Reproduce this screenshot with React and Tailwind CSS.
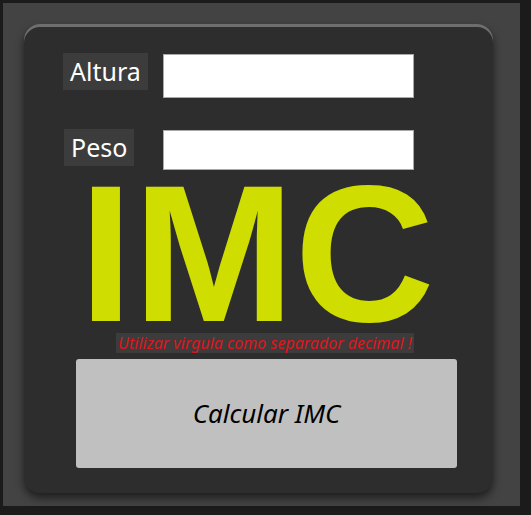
import React from "react";

// label chip + white text field, one row of the form
function Field({ label, inputClass }) {
  return (
    <div className="flex items-start">
      <div className="bg-[#3c3c3c] text-white text-[25px] leading-[37px] h-[37px] px-[7px]">
        {label}
      </div>
      <input
        type="text"
        className={`ml-auto bg-white border border-[#a9a9a9] outline-none w-[251px] ${inputClass}`}
      />
    </div>
  );
}

export default function App() {
  return (
    <div className="w-[531px] h-[515px] bg-[#1b1b1b] pt-[3px] pl-[3px] font-['Noto_Sans','Open_Sans',sans-serif]">
      <div className="w-[517px] h-[503px] bg-[#434343] pt-[21px] pl-[21px]">
        <div className="w-[469px] h-[469px] rounded-[16px] bg-[#2d2d2d] shadow-[inset_0_3px_0_#6e6e6e,0_5px_8px_rgba(0,0,0,0.55)] flex flex-col items-start pt-[29px]">
          <div className="ml-[39px] w-[351px]">
            <Field label="Altura" inputClass="h-[44px] mt-[1px]" />
          </div>
          <div className="ml-[40px] w-[350px] mt-[31px]">
            <Field label="Peso" inputClass="h-[40px] mt-[1px]" />
          </div>

          <div className="ml-[55px] h-[163px] pt-[5px] text-[194px] leading-[157px] font-bold text-[#cfdd00] font-['Liberation_Sans',Arial,sans-serif]">
            IMC
          </div>

          <div className="ml-[92px] w-[298px] h-[20px] bg-[#3c3c3c] text-[#e0141c] italic text-[16px] leading-[20px] text-center whitespace-nowrap">
            Utilizar virgula como separador decimal !
          </div>

          <button className="ml-[52px] mt-[6px] w-[381px] h-[109px] rounded-[3px] bg-[#c0c0c0] text-black italic text-[26px]">
            Calcular IMC
          </button>
        </div>
      </div>
    </div>
  );
}
